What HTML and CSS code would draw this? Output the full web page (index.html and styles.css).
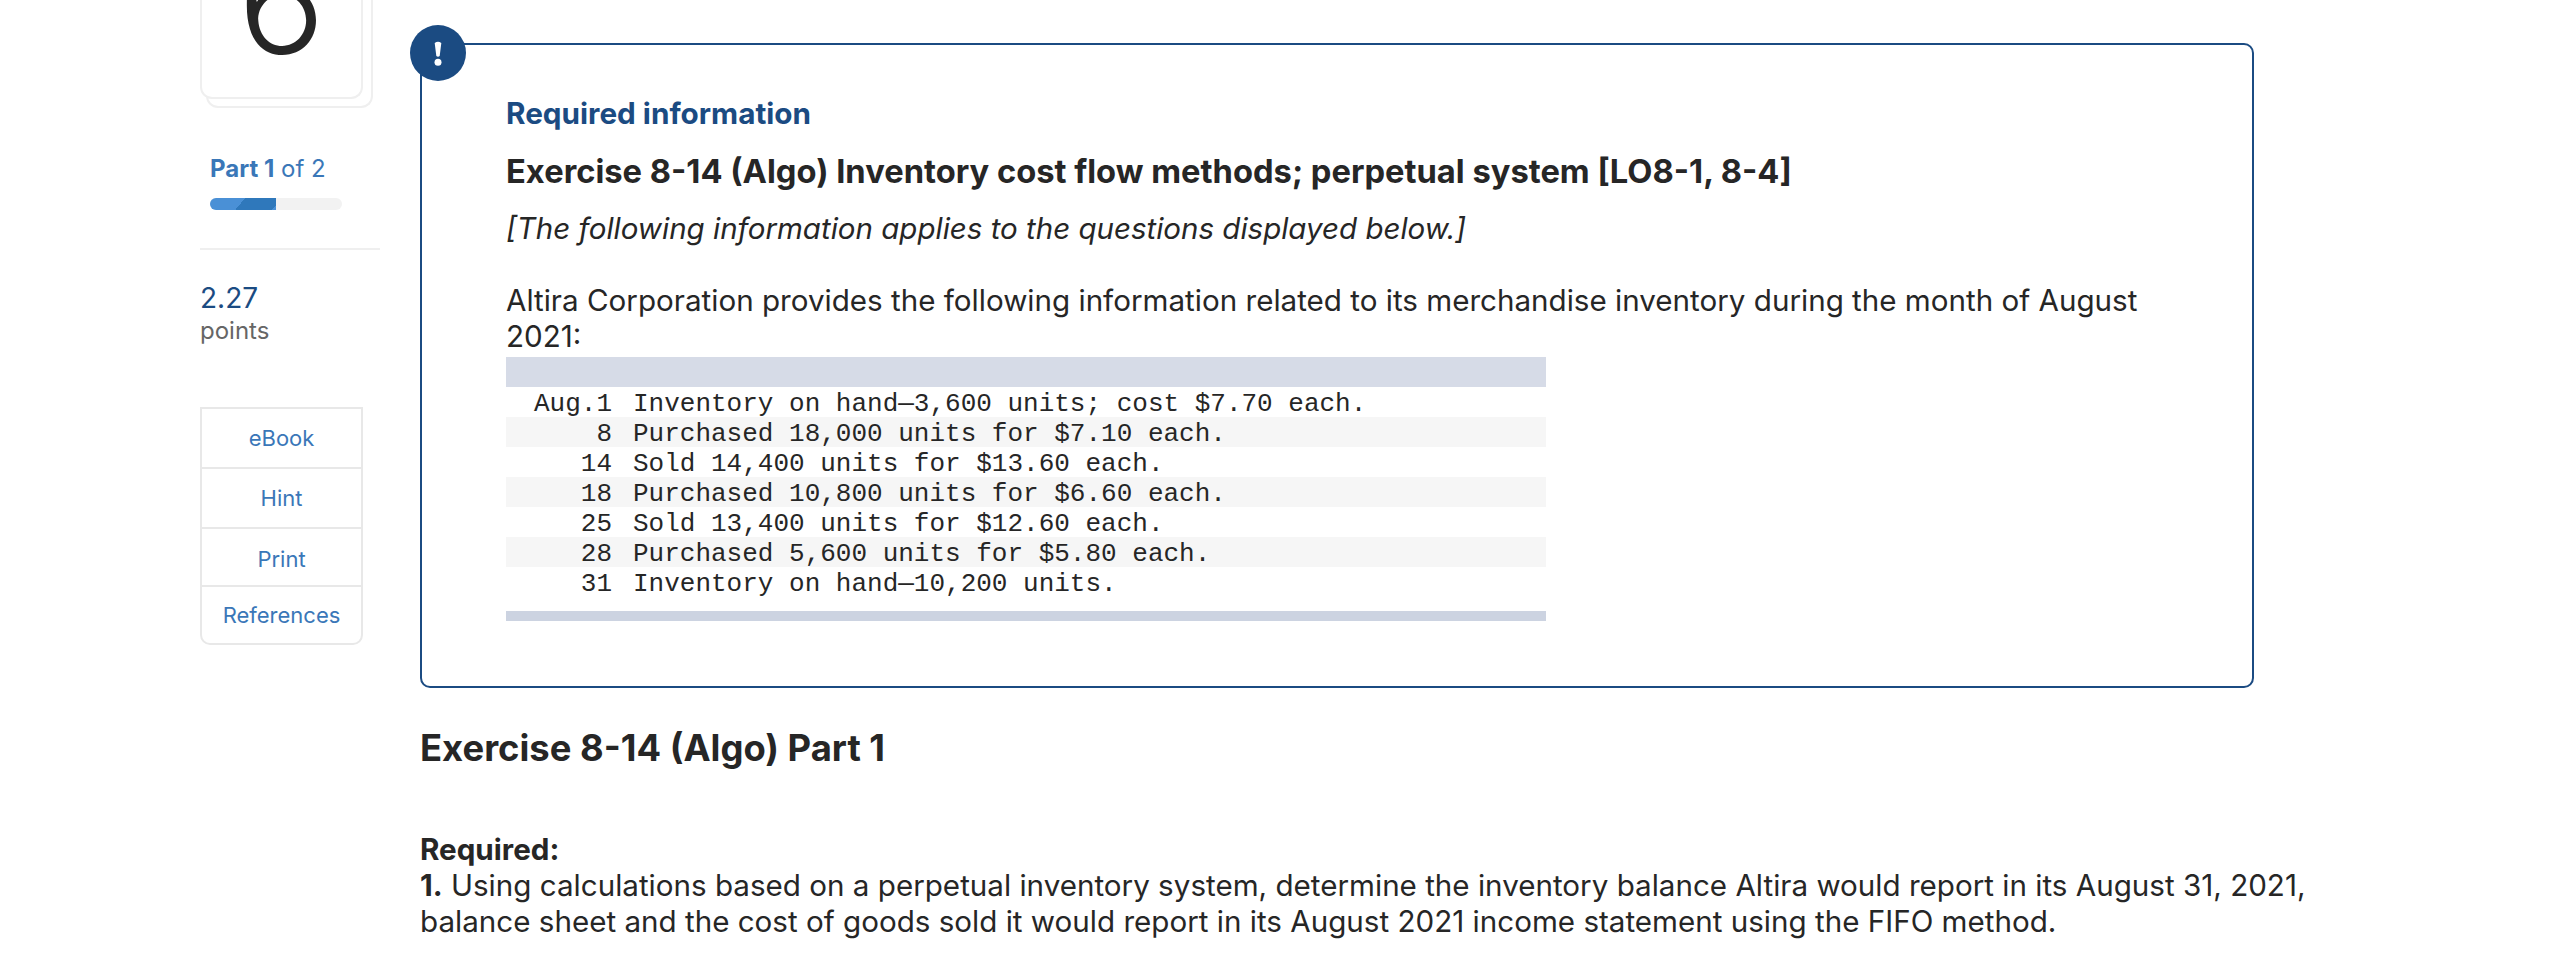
FILE: index.html
```html
<!DOCTYPE html>
<html lang="en">

<head>
    <meta charset="UTF-8">
    <title>Exercise 8-14 (Algo) Part 1</title>
    <link rel="stylesheet" href="styles.css">
</head>

<body>
    <div class="page">
        <div class="sidebar">
            <div class="numberstack">
                <div class="numbercard">
                    <span class="number">6</span>
                </div>
            </div>
            <p class="parttext"><b>Part 1</b> of 2</p>
            <div class="progress">
                <div class="progressfill"></div>
            </div>
            <div class="pointsblock">
                <p class="pointsvalue">2.27</p>
                <p class="pointslabel">points</p>
            </div>
            <div class="toolbox">
                <div class="toolitem tool1">eBook</div>
                <div class="toolitem tool2">Hint</div>
                <div class="toolitem tool3">Print</div>
                <div class="toolitem tool4">References</div>
            </div>
        </div>

        <div class="main">
            <div class="notice">
                <div class="noticeicon">
                    <svg width="14" height="25" viewBox="0 0 14 25">
                        <path d="M3.7 2 Q7 -0.6 10.3 2 L8.7 15 Q7 16.4 5.3 15 Z" fill="#fff" />
                        <circle cx="7" cy="21.2" r="3.5" fill="#fff" />
                    </svg>
                </div>
                <p class="noticelabel">Required information</p>
                <p class="noticetitle">Exercise 8-14 (Algo) Inventory cost flow methods; perpetual system [LO8-1, 8-4]</p>
                <p class="noticeitalic">[The following information applies to the questions displayed below.]</p>
                <p class="noticetext">Altira Corporation provides the following information related to its merchandise inventory during the month of August 2021:</p>
                <table class="datatable">
                    <tr class="headrow">
                        <td colspan="2"></td>
                    </tr>
                    <tr>
                        <td class="datecol">Aug.1</td>
                        <td>Inventory on hand—3,600 units; cost $7.70 each.</td>
                    </tr>
                    <tr class="stripe">
                        <td class="datecol">8</td>
                        <td>Purchased 18,000 units for $7.10 each.</td>
                    </tr>
                    <tr>
                        <td class="datecol">14</td>
                        <td>Sold 14,400 units for $13.60 each.</td>
                    </tr>
                    <tr class="stripe">
                        <td class="datecol">18</td>
                        <td>Purchased 10,800 units for $6.60 each.</td>
                    </tr>
                    <tr>
                        <td class="datecol">25</td>
                        <td>Sold 13,400 units for $12.60 each.</td>
                    </tr>
                    <tr class="stripe">
                        <td class="datecol">28</td>
                        <td>Purchased 5,600 units for $5.80 each.</td>
                    </tr>
                    <tr>
                        <td class="datecol">31</td>
                        <td>Inventory on hand—10,200 units.</td>
                    </tr>
                </table>
                <div class="tablefoot"></div>
            </div>

            <h2 class="parttitle">Exercise 8-14 (Algo) Part 1</h2>
            <p class="required">Required:</p>
            <p class="question"><b>1.</b> Using calculations based on a perpetual inventory system, determine the inventory balance Altira would report in its August 31, 2021, balance sheet and the cost of goods sold it would report in its August 2021 income statement using the FIFO method.</p>
        </div>
    </div>
</body>

</html>
```

FILE: styles.css
```css
html,
body {
    margin: 0;
    padding: 0;
    background-color: white;
    height: 973px;
    overflow: hidden;
}

p {
    margin: 0;
}

.page {
    display: flex;
    padding-left: 200px;
    font-family: Inter, "Open Sans", sans-serif;
    color: #262626;
}

.sidebar {
    width: 180px;
    margin-right: 40px;
    flex-shrink: 0;
}

.numberstack {
    position: relative;
    width: 163px;
    height: 108px;
}

.numberstack::after {
    content: "";
    position: absolute;
    left: 6px;
    top: 0;
    width: 167px;
    height: 108px;
    box-sizing: border-box;
    border: 2px solid #efefef;
    border-top: none;
    border-radius: 0 0 12px 12px;
    z-index: 0;
}

.numbercard {
    position: relative;
    z-index: 1;
    box-sizing: border-box;
    height: 99px;
    border: 2px solid #efefef;
    border-top: none;
    border-radius: 0 0 12px 12px;
    background-color: white;
    overflow: hidden;
    display: flex;
    justify-content: center;
}

.number {
    font-size: 146px;
    font-weight: 350;
    line-height: 146px;
    margin-top: -72px;
    color: #262626;
}

.parttext {
    margin: 46px 0 0 10px;
    font-size: 24px;
    line-height: 30px;
    color: #3a77b8;
}

.progress {
    width: 132px;
    height: 12px;
    margin: 14px 0 0 10px;
    border-radius: 6px;
    background-color: #f2f2f2;
    overflow: hidden;
}

.progressfill {
    width: 66px;
    height: 12px;
    background: linear-gradient(130deg, #4a90d6 27px, #2f78bb 27px, #2f78bb 55px, #4a90d6 55px);
}

.pointsblock {
    margin-top: 38px;
    padding-top: 30px;
    border-top: 2px solid #efefef;
}

.pointsvalue {
    font-size: 28px;
    line-height: 36px;
    color: #1b4b82;
}

.pointslabel {
    font-size: 24px;
    line-height: 30px;
    color: #666666;
}

.toolbox {
    box-sizing: border-box;
    width: 163px;
    margin-top: 61px;
    border: 2px solid #e8e8e8;
    border-radius: 0 0 10px 10px;
}

.toolitem {
    display: flex;
    align-items: center;
    justify-content: center;
    font-size: 22px;
    color: #3a77b8;
    border-bottom: 2px solid #e8e8e8;
}

.tool1,
.tool2 {
    height: 58px;
}

.tool3 {
    height: 53px;
    padding-top: 3px;
}

.tool4 {
    height: 56px;
    border-bottom: none;
}

.main {
    width: 1900px;
}

.notice {
    position: relative;
    box-sizing: border-box;
    width: 1834px;
    height: 645px;
    margin-top: 43px;
    padding: 50px 84px 0 84px;
    border: 2px solid #1b4b82;
    border-radius: 10px;
}

.noticeicon {
    position: absolute;
    left: -12px;
    top: -20px;
    width: 56px;
    height: 56px;
    border-radius: 50%;
    background-color: #1b4b82;
    display: flex;
    align-items: center;
    justify-content: center;
}

.noticelabel {
    font-size: 29.7px;
    line-height: 36px;
    font-weight: bold;
    color: #1b4b82;
}

.noticetitle {
    margin-top: 20px;
    font-size: 32.7px;
    line-height: 40px;
    font-weight: bold;
}

.noticeitalic {
    margin-top: 19px;
    font-size: 29.5px;
    line-height: 36px;
    font-style: italic;
}

.noticetext {
    margin-top: 36px;
    font-size: 29.6px;
    line-height: 36px;
}

.datatable {
    width: 1040px;
    margin-top: 3px;
    border-collapse: collapse;
    font-family: "Liberation Mono", monospace;
    font-size: 26px;
    color: #262626;
}

.datatable td {
    height: 26px;
    padding: 4px 0 0 0;
    line-height: 26px;
    white-space: pre;
}

.headrow td {
    background-color: #d6dbe7;
}

.stripe td {
    background-color: #f6f6f6;
}

.datatable .datecol {
    width: 106px;
    padding-right: 21px;
    text-align: right;
}

.tablefoot {
    width: 1040px;
    height: 10px;
    margin-top: 14px;
    background-color: #ccd3e1;
}

.parttitle {
    margin: 38px 0 0 0;
    font-size: 36.4px;
    line-height: 44px;
    font-weight: bold;
}

.required {
    margin-top: 61px;
    font-size: 29.6px;
    line-height: 36px;
    font-weight: bold;
}

.question {
    font-size: 29.6px;
    line-height: 36px;
}
```
